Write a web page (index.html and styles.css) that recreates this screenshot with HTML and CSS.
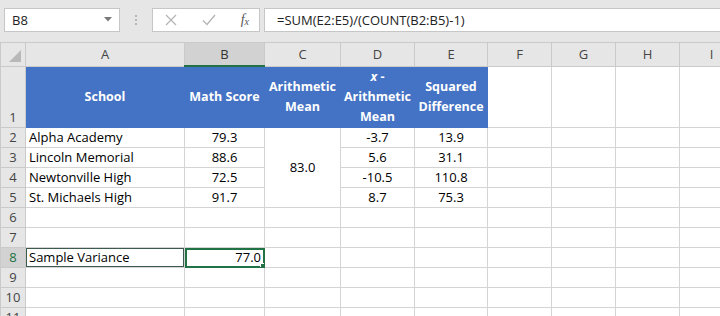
FILE: index.html
```html
<!DOCTYPE html>
<html lang="en">
<head>
    <meta charset="UTF-8">
    <title>Sample Variance</title>
    <link rel="stylesheet" href="styles.css">
</head>
<body>
    <!-- name box + formula bar -->
    <div class="toolbar">
        <div class="namebox">
            <span>B8</span>
            <svg class="caret" width="8" height="5" viewBox="0 0 8 5"><path d="M0 0 L8 0 L4 4.5 Z" fill="#7a7a7a"/></svg>
        </div>
        <div class="grip"><i></i><i></i><i></i></div>
        <div class="fxbox">
            <svg width="12" height="12" viewBox="0 0 12 12"><path d="M1 1 L11 11 M11 1 L1 11" stroke="#b4b4b4" stroke-width="1.2" fill="none"/></svg>
            <svg width="14" height="12" viewBox="0 0 14 12"><path d="M1 6.5 L5 10.5 L13 1" stroke="#b4b4b4" stroke-width="1.3" fill="none"/></svg>
            <span class="fx">f<sub>x</sub></span>
        </div>
        <div class="formula">=SUM(E2:E5)/(COUNT(B2:B5)-1)</div>
    </div>

    <div class="sheet">
        <table class="grid">
            <colgroup>
                <col class="c-rh"><col class="c-a"><col class="c-b"><col class="c-c"><col class="c-d">
                <col class="c-e"><col class="c-f"><col class="c-g"><col class="c-h"><col class="c-i">
            </colgroup>
            <tr class="colhead">
                <th class="corner"><span class="tri"></span></th>
                <th>A</th><th class="on">B</th><th>C</th><th>D</th><th>E</th><th>F</th><th>G</th><th>H</th><th>I</th>
            </tr>
            <tr class="r1">
                <th class="rh">1</th>
                <td class="hd">School</td>
                <td class="hd">Math Score</td>
                <td class="hd">Arithmetic<br>Mean</td>
                <td class="hd"><em>x</em> -<br>Arithmetic<br>Mean</td>
                <td class="hd">Squared<br>Difference</td>
                <td></td><td></td><td></td><td></td>
            </tr>
            <tr>
                <th class="rh">2</th><td>Alpha Academy</td><td class="ctr">79.3</td>
                <td class="ctr" rowspan="4">83.0</td>
                <td class="ctr">-3.7</td><td class="ctr">13.9</td><td></td><td></td><td></td><td></td>
            </tr>
            <tr>
                <th class="rh">3</th><td>Lincoln Memorial</td><td class="ctr">88.6</td>
                <td class="ctr">5.6</td><td class="ctr">31.1</td><td></td><td></td><td></td><td></td>
            </tr>
            <tr>
                <th class="rh">4</th><td>Newtonville High</td><td class="ctr">72.5</td>
                <td class="ctr">-10.5</td><td class="ctr">110.8</td><td></td><td></td><td></td><td></td>
            </tr>
            <tr>
                <th class="rh">5</th><td>St. Michaels High</td><td class="ctr">91.7</td>
                <td class="ctr">8.7</td><td class="ctr">75.3</td><td></td><td></td><td></td><td></td>
            </tr>
            <tr>
                <th class="rh">6</th><td></td><td></td><td></td><td></td><td></td><td></td><td></td><td></td><td></td>
            </tr>
            <tr>
                <th class="rh">7</th><td></td><td></td><td></td><td></td><td></td><td></td><td></td><td></td><td></td>
            </tr>
            <tr>
                <th class="rh on">8</th><td class="boxed">Sample Variance</td><td class="num sel">77.0<span class="handle"></span></td>
                <td></td><td></td><td></td><td></td><td></td><td></td><td></td>
            </tr>
            <tr>
                <th class="rh">9</th><td></td><td></td><td></td><td></td><td></td><td></td><td></td><td></td><td></td>
            </tr>
            <tr>
                <th class="rh">10</th><td></td><td></td><td></td><td></td><td></td><td></td><td></td><td></td><td></td>
            </tr>
            <tr>
                <th class="rh">11</th><td></td><td></td><td></td><td></td><td></td><td></td><td></td><td></td><td></td>
            </tr>
        </table>
    </div>
</body>
</html>
```

FILE: styles.css
```css
body {
    margin: 0;
    width: 720px;
    height: 316px;
    overflow: hidden;
    font-family: 'Open Sans', 'Liberation Sans', sans-serif;
    font-size: 13px;
    color: #000;
    background-color: #fff;
}
.toolbar {
    display: flex;
    align-items: center;
    height: 42px;
    padding: 0 0 0 4px;
    background-color: #e6e6e6;
    box-sizing: border-box;
}
.namebox {
    display: flex;
    align-items: center;
    justify-content: space-between;
    width: 116px;
    height: 24px;
    padding: 0 7px 0 7px;
    box-sizing: border-box;
    background-color: #fff;
    border: 1px solid #c6c6c6;
    color: #222;
    margin-top: -3px;
}
.grip {
    display: flex;
    flex-direction: column;
    gap: 2px;
    width: 32px;
    align-items: center;
    margin-top: -3px;
}
.grip i {
    width: 2px;
    height: 2px;
    background-color: #b8b8b8;
}
.fxbox {
    display: flex;
    align-items: center;
    justify-content: space-between;
    width: 108px;
    height: 24px;
    padding: 0 10px 0 12px;
    box-sizing: border-box;
    background-color: #fff;
    border: 1px solid #c6c6c6;
    margin-top: -3px;
}
.fx {
    font-family: 'Liberation Serif', serif;
    font-style: italic;
    font-size: 14px;
    color: #555;
}
.fx sub {
    font-size: 10px;
    vertical-align: -1px;
}
.formula {
    flex: 1;
    height: 24px;
    line-height: 22px;
    margin-left: 4px;
    padding-left: 12px;
    box-sizing: border-box;
    background-color: #fff;
    border: 1px solid #c6c6c6;
    border-right: none;
    color: #222;
    margin-top: -3px;
    white-space: nowrap;
}
.grid {
    border-collapse: collapse;
    table-layout: fixed;
    width: 743px;
}
.c-rh { width: 25px; }
.c-a { width: 159px; }
.c-b { width: 80px; }
.c-c { width: 76px; }
.c-d { width: 74px; }
.c-e { width: 73px; }
.c-f { width: 64px; }
.c-g { width: 64px; }
.c-h { width: 64px; }
.c-i { width: 64px; }
.grid td, .grid th {
    border: 1px solid #d4d4d4;
    padding: 0 3px;
    height: 19px;
    line-height: 19px;
    white-space: nowrap;
    overflow: hidden;
}
.colhead th {
    height: 22px;
    background-color: #e6e6e6;
    border-color: #cacaca;
    font-weight: normal;
    color: #444;
    text-align: center;
}
.colhead th.on {
    background-color: #d2d2d2;
    border-bottom: 2px solid #217346;
    color: #333;
}
.corner {
    position: relative;
}
.tri {
    position: absolute;
    right: 4px;
    bottom: 4px;
    width: 0;
    height: 0;
    border-left: 12px solid transparent;
    border-bottom: 12px solid #b8b8b8;
}
.rh {
    background-color: #e6e6e6;
    border-color: #cacaca !important;
    font-weight: normal;
    color: #444;
    text-align: center;
    padding: 0 !important;
}
.rh.on {
    background-color: #d2d2d2;
    color: #217346;
}
.r1 td, .r1 th {
    height: 60px;
}
.r1 th {
    vertical-align: bottom;
}
.hd {
    background-color: #4472c4;
    border-color: #4472c4 !important;
    color: #fff;
    font-weight: bold;
    font-size: 12.5px;
    text-align: center;
    line-height: 20px !important;
    padding: 0 !important;
}
.hd em {
    font-style: italic;
}
.ctr {
    text-align: center;
}
.num {
    text-align: right;
}
.boxed {
    box-shadow: inset 0 0 0 1px #3c5a50;
}
.sel {
    position: relative;
    outline: 2px solid #217346;
    outline-offset: -2px;
}
.handle {
    position: absolute;
    right: -3px;
    bottom: -3px;
    width: 5px;
    height: 5px;
    background-color: #217346;
    border: 1px solid #fff;
}
```
